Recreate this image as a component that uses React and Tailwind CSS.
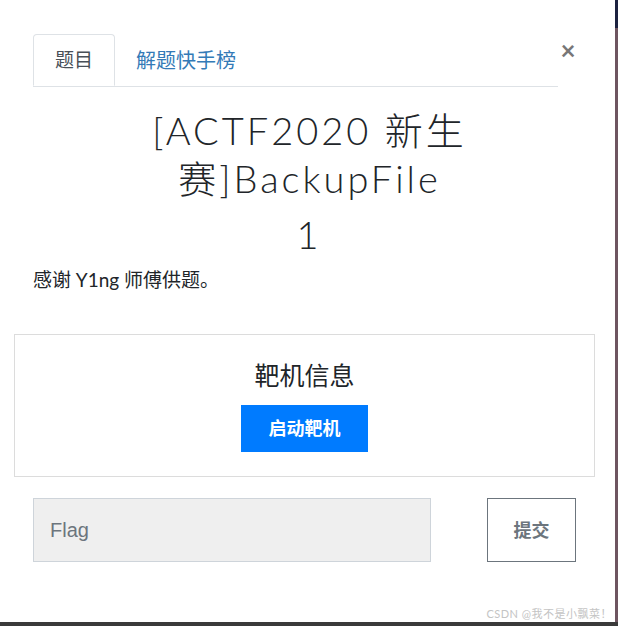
export default function App() {
  return (
    <div className="w-[618px] h-[626px] flex flex-col bg-white overflow-hidden font-['Lato','Noto_Sans_CJK_SC',sans-serif] text-[#212529]">
      <div className="flex flex-1">
        <div className="flex-1 flex flex-col">
          {/* tabs */}
          <div className="flex items-start pt-[34px]">
            <div className="ml-[33px] w-[525px] flex border-b border-[#dee2e6]">
              <div className="w-[82px] h-[52px] -mb-px border border-[#dee2e6] border-b-white rounded-t-[4px] bg-white flex items-center justify-center text-[19px] text-[#495057]">
                题目
              </div>
              <div className="h-[52px] flex items-center pl-[21px] text-[20px] text-[#337ab7]">
                解题快手榜
              </div>
            </div>
            <div className="ml-[1px] w-[18px] text-center text-[26px] leading-none font-bold text-[#777] mt-[3px]">
              ×
            </div>
          </div>

          {/* title */}
          <h1 className="mt-[19px] text-center text-[38px] leading-[48px] font-light tracking-[3px] pl-[4px]">
            [ACTF2020 新生
            <br />
            赛]BackupFile
          </h1>
          <div className="mt-[4px] text-center text-[38px] leading-[56px] font-light">1</div>
          <p className="mt-[4px] ml-[33px] text-[19px] leading-[28px]">感谢 Y1ng 师傅供题。</p>

          {/* target box */}
          <div className="mt-[40px] mx-[14px] w-[581px] h-[143px] border border-[#dcdcdc] flex flex-col items-center">
            <div className="mt-[23px] text-[25px] leading-[34px]">靶机信息</div>
            <button className="mt-[13px] w-[127px] h-[47px] bg-[#007bff] text-white text-[18px] font-bold">
              启动靶机
            </button>
          </div>

          {/* flag input */}
          <div className="mt-[21px] flex items-center">
            <div className="ml-[33px] w-[398px] h-[64px] bg-[#efefef] border border-[#ced4da] flex items-center pl-[16px] text-[20px] text-[#6c757d] font-['Liberation_Sans',sans-serif]">
              Flag
            </div>
            <button className="ml-[56px] w-[89px] h-[64px] border border-[#6c757d] text-[18px] font-bold text-[#6c757d]">
              提交
            </button>
          </div>

          <div className="mt-auto mb-[1px] text-right pr-[3px] text-[11px] leading-[14px] tracking-[0.5px] text-[#c4c4c4]">
            CSDN @我不是小飘菜！
          </div>
        </div>
        <div className="w-[3px] flex flex-col">
          <div className="h-[28px] bg-[#1c2240]" />
          <div className="flex-1 bg-[#6e5560]" />
        </div>
      </div>
      <div className="h-[4px] bg-[#3a3a3a]" />
    </div>
  );
}
